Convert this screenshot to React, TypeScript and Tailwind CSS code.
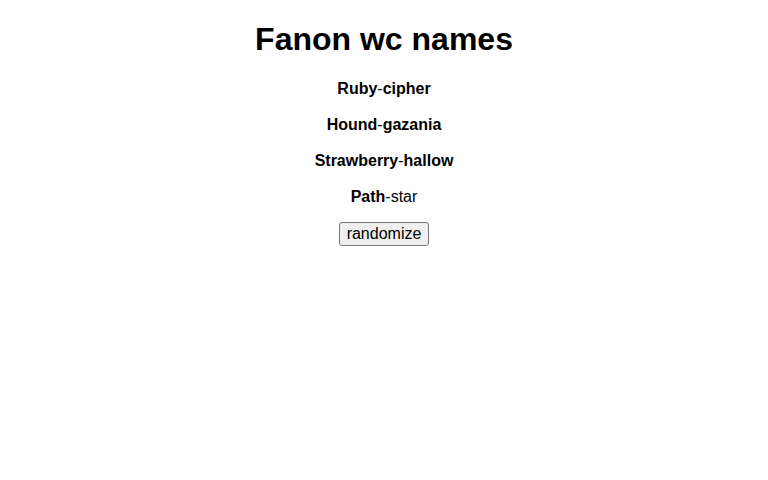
import React, { useState } from 'react';

const names: [string, string, boolean][] = [
  ['Ruby', 'cipher', true],
  ['Hound', 'gazania', true],
  ['Strawberry', 'hallow', true],
  ['Path', 'star', false],
];

export default function App() {
  const [list] = useState(names);

  return (
    <div className="min-h-[480px] bg-white text-center text-black font-['Liberation_Sans',Arial,sans-serif]">
      <h1 className="pt-[21px] mb-[21px] text-[32px] leading-[37px] font-bold">Fanon wc names</h1>
      <div className="flex flex-col gap-4">
        {list.map(([prefix, suffix, boldSuffix]) => (
          <p key={prefix} className="text-base leading-5">
            <b>{prefix}</b>-{boldSuffix ? <b>{suffix}</b> : suffix}
          </p>
        ))}
      </div>
      <div className="mt-[15px]">
        <button className="bg-[#efefef] border border-[#767676] rounded-[3px] px-[7px] py-[2px] text-base leading-[18px] text-black">
          randomize
        </button>
      </div>
    </div>
  );
}
